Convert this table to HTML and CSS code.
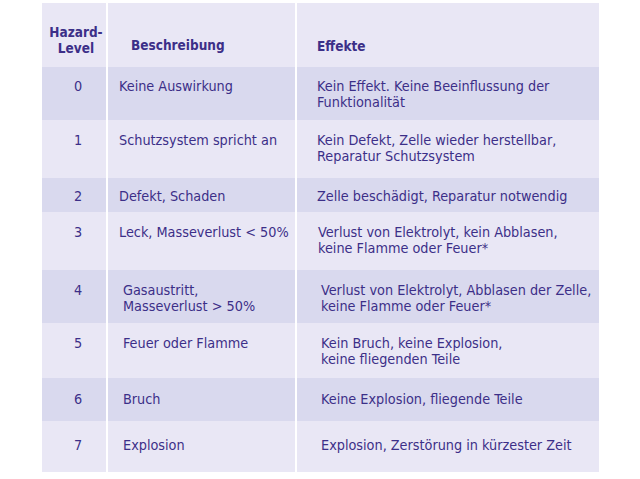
FILE: index.html
```
<!DOCTYPE html>
<html lang="de">
<head>
<meta charset="utf-8">
<title>Hazard-Level</title>
<link rel="stylesheet" href="styles.css">
</head>
<body>
<div class="table">
  <div class="row head">
    <div class="cell lvl">Hazard-<br>Level</div>
    <div class="cell desc">Beschreibung</div>
    <div class="cell eff">Effekte</div>
  </div>
  <div class="row dark r0">
    <div class="cell lvl">0</div>
    <div class="cell desc">Keine Auswirkung</div>
    <div class="cell eff">Kein Effekt. Keine Beeinflussung der<br>Funktionalität</div>
  </div>
  <div class="row light r1">
    <div class="cell lvl">1</div>
    <div class="cell desc">Schutzsystem spricht an</div>
    <div class="cell eff">Kein Defekt, Zelle wieder herstellbar,<br>Reparatur Schutzsystem</div>
  </div>
  <div class="row dark r2">
    <div class="cell lvl">2</div>
    <div class="cell desc">Defekt, Schaden</div>
    <div class="cell eff">Zelle beschädigt, Reparatur notwendig</div>
  </div>
  <div class="row light r3">
    <div class="cell lvl">3</div>
    <div class="cell desc">Leck, Masseverlust &lt; 50%</div>
    <div class="cell eff">Verlust von Elektrolyt, kein Abblasen,<br>keine Flamme oder Feuer*</div>
  </div>
  <div class="row dark r4 shift">
    <div class="cell lvl">4</div>
    <div class="cell desc">Gasaustritt,<br>Masseverlust &gt; 50%</div>
    <div class="cell eff">Verlust von Elektrolyt, Abblasen der Zelle,<br>keine Flamme oder Feuer*</div>
  </div>
  <div class="row light r5 shift">
    <div class="cell lvl">5</div>
    <div class="cell desc">Feuer oder Flamme</div>
    <div class="cell eff">Kein Bruch, keine Explosion,<br>keine fliegenden Teile</div>
  </div>
  <div class="row dark r6 shift">
    <div class="cell lvl">6</div>
    <div class="cell desc">Bruch</div>
    <div class="cell eff">Keine Explosion, fliegende Teile</div>
  </div>
  <div class="row light r7 shift">
    <div class="cell lvl">7</div>
    <div class="cell desc">Explosion</div>
    <div class="cell eff">Explosion, Zerstörung in kürzester Zeit</div>
  </div>
</div>
</body>
</html>
```
FILE: styles.css
```
html, body {
  margin: 0;
  padding: 0;
  background: #ffffff;
}

body {
  font-family: "DejaVu Sans Condensed", "DejaVu Sans", sans-serif;
  font-stretch: condensed;
  font-size: 14.3px;
  line-height: 16px;
  color: #3c2f88;
}

.table {
  margin: 3px 0 0 42px;
  width: 557px;
  display: flex;
  flex-direction: column;
}

.row {
  display: grid;
  grid-template-columns: 64px 187px 302px;
  column-gap: 2px;
}

.row .cell {
  background: #e9e7f5;
  box-sizing: border-box;
}

.row.dark .cell {
  background: #d9d9ee;
}

.cell.lvl {
  text-align: center;
  padding-left: 8px;
}

.cell.desc {
  padding-left: 11px;
}

.cell.eff {
  padding-left: 20px;
}

.row.shift .cell.desc {
  padding-left: 15px;
}

.row.shift .cell.eff {
  padding-left: 24px;
}

.row.r3 .cell.eff {
  padding-left: 21px;
}

/* header */
.row.head {
  height: 64px;
  font-weight: bold;
  font-size: 13.5px;
}

.row.head .cell.lvl {
  padding: 21px 0 0 4px;
  line-height: 16px;
}

.row.head .cell.desc {
  padding: 34px 0 0 23px;
}

.row.head .cell.eff {
  padding: 35px 0 0 20px;
}

/* body rows */
.r0 { height: 53px; }
.r0 .cell { padding-top: 11px; }

.r1 { height: 58px; }
.r1 .cell { padding-top: 12px; }

.r2 { height: 34px; }
.r2 .cell { padding-top: 10px; }

.r3 { height: 58px; }
.r3 .cell { padding-top: 12px; }

.r4 { height: 53px; }
.r4 .cell { padding-top: 12px; }

.r5 { height: 55px; }
.r5 .cell { padding-top: 12px; }

.r6 { height: 43px; }
.r6 .cell { padding-top: 13px; }

.r7 { height: 51px; }
.r7 .cell { padding-top: 16px; }
```
